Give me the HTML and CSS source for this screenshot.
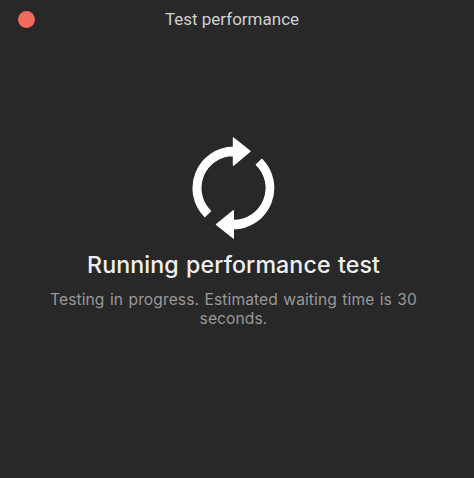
FILE: index.html
```html
<!DOCTYPE html>
<html lang="en">
<head>
<meta charset="utf-8">
<title>Test performance</title>
<link rel="stylesheet" href="styles.css">
</head>
<body>
<div class="window">
  <header class="titlebar">
    <span class="close"></span>
    <span class="title">Test performance</span>
  </header>
  <main class="content">
    <svg class="sync" viewBox="0 0 84 104" width="84" height="104">
      <path d="M42.4 11A41 41 0 0 0 13.8 80.7L19.5 75A32.4 32.4 0 0 1 42.4 19.6V29.3L59.1 15.3L42.4 1.9Z"/>
      <path d="M71 23.3L65.3 28.7A32.4 32.4 0 0 1 42.4 84.4V74.6L25.4 88.5L42.4 102.1V93A41 41 0 0 0 71 23.3Z"/>
    </svg>
    <h1 class="heading">Running performance test</h1>
    <p class="message">Testing in progress. Estimated waiting time is 30 seconds.</p>
  </main>
</div>
</body>
</html>
```
FILE: styles.css
```css
body {
  margin: 0;
  background: #282828;
  font-family: Inter, "Liberation Sans", sans-serif;
}
.window {
  height: 478px;
  background: #282828;
  overflow: hidden;
}
.titlebar {
  display: grid;
  grid-template-columns: 36px 1fr 36px;
  align-items: center;
  height: 38px;
}
.close {
  width: 17px;
  height: 17px;
  margin-left: 18px;
  border-radius: 50%;
  background: #f16b5f;
}
.title {
  margin-right: 10px;
  text-align: center;
  font-family: Roboto, sans-serif;
  font-size: 17px;
  color: #d0d0d0;
}
.content {
  display: flex;
  flex-direction: column;
  align-items: center;
  width: 467px;
  padding-top: 98px;
}
.sync {
  margin-right: 1px;
  fill: #fff;
  stroke: #fff;
  stroke-width: 1.2;
  stroke-linejoin: round;
}
.heading {
  margin: 10px 0 0;
  font-size: 23.2px;
  line-height: 30px;
  font-weight: 500;
  letter-spacing: 0.1px;
  word-spacing: 1px;
  white-space: nowrap;
  color: #f0f0f0;
}
.message {
  width: 380px;
  margin: 10px 0 0;
  text-align: center;
  font-size: 15.6px;
  line-height: 19px;
  letter-spacing: 0.1px;
  word-spacing: 0.9px;
  color: #989898;
}
```
